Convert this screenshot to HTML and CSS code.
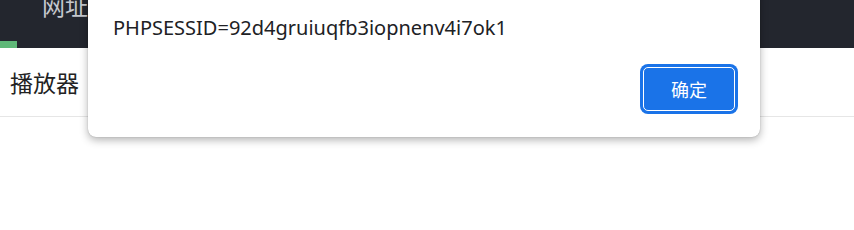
FILE: index.html
```html
<!DOCTYPE html>
<html lang="zh-CN">
<head>
  <meta charset="UTF-8">
  <title>播放器</title>
  <link rel="stylesheet" href="styles.css">
</head>
<body>
  <div class="header">
    <span class="nav-bar"></span>
    <a class="nav-item" href="#">网址</a>
  </div>

  <div class="tabs">
    <span class="tab-title">播放器</span>
  </div>

  <div class="dialog">
    <p class="dialog-msg">PHPSESSID=92d4gruiuqfb3iopnenv4i7ok1</p>
    <div class="dialog-actions">
      <button class="btn-ok">确定</button>
    </div>
  </div>
</body>
</html>
```

FILE: styles.css
```css
html, body { margin: 0; background: #fff; }
body { min-height: 230px; font-family: "Noto Sans", "Noto Sans CJK SC", sans-serif; position: relative; }
.header { height: 48px; background: #23262e; position: relative; overflow: hidden; }
.nav-bar { position: absolute; left: 0; bottom: 0; width: 17px; height: 7px; background: #5fb878; }
.nav-item { display: block; width: fit-content; margin: -10px 0 0 42px; font-size: 23px; line-height: 30px; color: #c5c8ce; text-decoration: none; font-family: "Noto Sans CJK SC", sans-serif; }
.tabs { height: 69px; border-bottom: 1px solid #e6e6e6; display: flex; align-items: center; padding-left: 10px; box-sizing: border-box; }
.tab-title { font-size: 23px; color: #222; font-family: "Noto Sans CJK SC", sans-serif; }
.dialog { position: absolute; left: 88px; top: -10px; width: 672px; height: 147px; background: #fff; border-radius: 0 0 8px 8px; box-shadow: 0 3px 8px rgba(0,0,0,0.3), 0 0 1px rgba(0,0,0,0.35); box-sizing: border-box; padding: 24px 25px 0 25px; }
.dialog-msg { margin: 0; font-size: 20px; line-height: 28px; color: #202124; }
.dialog-actions { display: flex; justify-content: flex-end; margin-top: 25px; }
.btn-ok { width: 92px; height: 44px; background: #1a73e8; color: #fff; border: 1px solid #fff; border-radius: 5px; box-shadow: 0 0 0 3px #1a73e8; font-size: 18px; font-family: "Noto Sans CJK SC", sans-serif; }
```
